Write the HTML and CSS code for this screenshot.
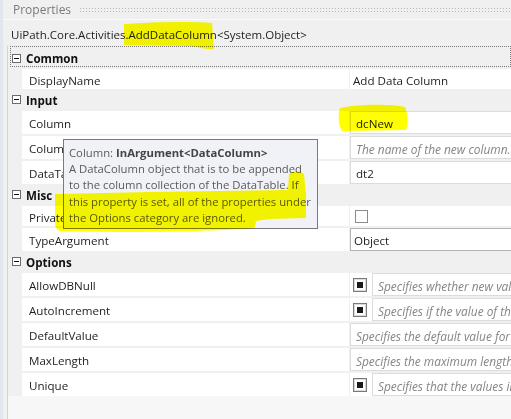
FILE: index.html
```html
<!DOCTYPE html>
<html>
<head>
<meta charset="utf-8">
<link rel="stylesheet" href="styles.css">
</head>
<body>
<div class="panel">
  <div class="titlebar"><span class="title">Properties</span><span class="grip"></span></div>
  <div class="typename">UiPath.Core.Activities.AddDataColumn&lt;System.Object&gt;</div>
  <div class="grid">
    <div class="cat">
      <div class="cat-head first focused"><svg class="toggle" width="9" height="9" viewBox="0 0 9 9"><rect x="0.5" y="0.5" width="8" height="8" fill="#fff" stroke="#6b6b6b"/><path d="M2 4.5H7" stroke="#111"/></svg>Common</div>
      <div class="row short"><div class="strip"></div><div class="name">DisplayName</div><div class="sep"></div><div class="value"><span class="plain">Add Data Column</span></div></div>
    </div>
    <div class="cat">
      <div class="cat-head"><svg class="toggle" width="9" height="9" viewBox="0 0 9 9"><rect x="0.5" y="0.5" width="8" height="8" fill="#fff" stroke="#6b6b6b"/><path d="M2 4.5H7" stroke="#111"/></svg>Input</div>
      <div class="row"><div class="strip"></div><div class="name">Column</div><div class="sep"></div><div class="value"><div class="box">dcNew</div></div></div>
      <div class="row"><div class="strip"></div><div class="name">ColumnName</div><div class="sep"></div><div class="value"><div class="box ph">The name of the new column.</div></div></div>
      <div class="row"><div class="strip"></div><div class="name">DataTable</div><div class="sep"></div><div class="value"><div class="box">dt2</div></div></div>
    </div>
    <div class="cat">
      <div class="cat-head"><svg class="toggle" width="9" height="9" viewBox="0 0 9 9"><rect x="0.5" y="0.5" width="8" height="8" fill="#fff" stroke="#6b6b6b"/><path d="M2 4.5H7" stroke="#111"/></svg>Misc</div>
      <div class="row check-row"><div class="strip"></div><div class="name">Private</div><div class="sep"></div><div class="value"><span class="chk"></span></div></div>
      <div class="row"><div class="strip"></div><div class="name">TypeArgument</div><div class="sep"></div><div class="value"><div class="box combo">Object</div></div></div>
    </div>
    <div class="cat">
      <div class="cat-head"><svg class="toggle" width="9" height="9" viewBox="0 0 9 9"><rect x="0.5" y="0.5" width="8" height="8" fill="#fff" stroke="#6b6b6b"/><path d="M2 4.5H7" stroke="#111"/></svg>Options</div>
      <div class="row"><div class="strip"></div><div class="name">AllowDBNull</div><div class="sep"></div><div class="value"><span class="chk null"></span><div class="box ph">Specifies whether new values in this column can be null.</div></div></div>
      <div class="row"><div class="strip"></div><div class="name">AutoIncrement</div><div class="sep"></div><div class="value"><span class="chk null"></span><div class="box ph">Specifies if the value of the column increments automatically.</div></div></div>
      <div class="row"><div class="strip"></div><div class="name">DefaultValue</div><div class="sep"></div><div class="value"><div class="box ph">Specifies the default value for the column.</div></div></div>
      <div class="row"><div class="strip"></div><div class="name">MaxLength</div><div class="sep"></div><div class="value"><div class="box ph">Specifies the maximum length of a text column.</div></div></div>
      <div class="row"><div class="strip"></div><div class="name">Unique</div><div class="sep"></div><div class="value"><span class="chk null"></span><div class="box ph">Specifies that the values in each row must be unique.</div></div></div>
    </div>
    <div class="filler"></div>
  </div>
</div>
<div class="tooltip">Column: <b>InArgument&lt;DataColumn&gt;</b><br>A DataColumn object that is to be appended<br>to the column collection of the DataTable. If<br>this property is set, all of the properties under<br>the Options category are ignored.</div>
<svg class="marker" width="511" height="419" viewBox="0 0 511 419">
  <path d="M124,24 C150,22 190,21 212,23 L214,49 C206,50 199,47 190,46 L124,45 Z" fill="#ffff00"/>
  <path d="M340,108 C360,104 390,104 405,107 C408,115 408,125 406,130 L342,131 C338,125 338,114 340,108 Z" fill="#ffff00"/>
  <path d="M55,194 L150,192 L288,190 L289,174 C292,171 300,170 304,174 L306,195 L306,218 L270,219 L256,221 L255,228 C220,231 160,232 120,232 L60,231 C56,229 55,226 55,224 Z" fill="#ffff00"/>
</svg>
</body>
</html>
```

FILE: styles.css
```css
* { box-sizing: border-box; }
html, body { margin: 0; padding: 0; }
body {
  width: 511px;
  height: 419px;
  overflow: hidden;
  position: relative;
  background: #f0f0f0;
  font-family: "Open Sans", "Noto Sans", sans-serif;
  font-size: 11.6px;
  color: #1e1e1e;
}
.panel {
  display: flex;
  flex-direction: column;
  height: 100%;
  border-left: 3px solid #e2e7ed;
}
.titlebar {
  height: 20px;
  display: flex;
  align-items: center;
  gap: 8px;
  padding-left: 10px;
  border-bottom: 1px solid #fbfbfb;
}
.title {
  color: #7a7a7a;
  font-size: 12px;
}
.grip {
  flex: 1;
  height: 5px;
  background-image: radial-gradient(circle, #b5b5b5 0.7px, transparent 0.9px);
  background-size: 3px 3px;
}
.typename {
  height: 26px;
  display: flex;
  align-items: center;
  padding: 2px 0 0 8px;
  font-size: 11.5px;
  color: #1e1e1e;
}
.grid {
  flex: 1;
  margin-left: 4px;
  border-left: 1px solid #d4d4d4;
  display: flex;
  flex-direction: column;
  overflow: hidden;
}
.cat { display: flex; flex-direction: column; }
.cat-head {
  height: 20px;
  display: flex;
  align-items: center;
  gap: 5px;
  padding: 2px 0 0 4px;
  font-weight: 700;
  font-size: 11.6px;
  color: #111;
}
.cat-head.first { height: 21px; padding-top: 4px; }
.focused { outline: 1px dotted #7a7a7a; outline-offset: -1px; margin-left: 2px; padding-left: 2px; }
.toggle { flex: none; margin-top: -1px; }
.row {
  display: grid;
  grid-template-columns: 14px 327px 1px 420px;
  height: 23px;
  margin-top: 2px;
}
.row.short { height: 20px; }
.row.check-row { height: 20px; }
.strip { background: #f0f0f0; }
.name {
  background: #fff;
  padding: 2px 0 0 7px;
  display: flex;
  align-items: center;
  white-space: nowrap;
}
.sep { background: #f0f0f0; }
.value {
  background: #fff;
  display: flex;
  align-items: center;
  overflow: hidden;
  white-space: nowrap;
}
.plain { padding: 2px 0 0 3px; }
.box {
  height: 100%;
  flex: 1;
  min-width: 0;
  display: flex;
  align-items: center;
  padding: 2px 0 0 5px;
  border: 1px solid #dcdcdc;
  white-space: nowrap;
  overflow: hidden;
}
.box.ph { color: #858585; font-style: italic; font-size: 11.9px; }
.box.combo { border-color: #b4b4b4; padding-left: 3px; }
.chk {
  flex: none;
  width: 13px;
  height: 13px;
  margin-left: 5px;
  border: 1px solid #8c8c8c;
  background: #fff;
}
.chk.null {
  width: 14px;
  height: 14px;
  margin-left: 3px;
  margin-right: 5px;
  border: 1px solid #7a7a7a;
  padding: 3px;
  background: #fff content-box;
  box-shadow: inset 0 0 0 1px #dcdcdc;
}
.chk.null::after {
  content: "";
  display: block;
  width: 100%;
  height: 100%;
  background: #1a1a1a;
}
.filler { flex: 1; background: #f7f7f7; }
.tooltip {
  position: absolute;
  left: 63px;
  top: 139px;
  width: 255px;
  height: 90px;
  padding: 5px 0 0 5px;
  background: #f1f2f7;
  border: 1px solid #7a7a7a;
  color: #5a5a5a;
  font-size: 11.3px;
  line-height: 16.2px;
  white-space: nowrap;
}
.tooltip b { color: #444; }
.marker {
  position: absolute;
  left: 0;
  top: 0;
  pointer-events: none;
  mix-blend-mode: multiply;
}
```
